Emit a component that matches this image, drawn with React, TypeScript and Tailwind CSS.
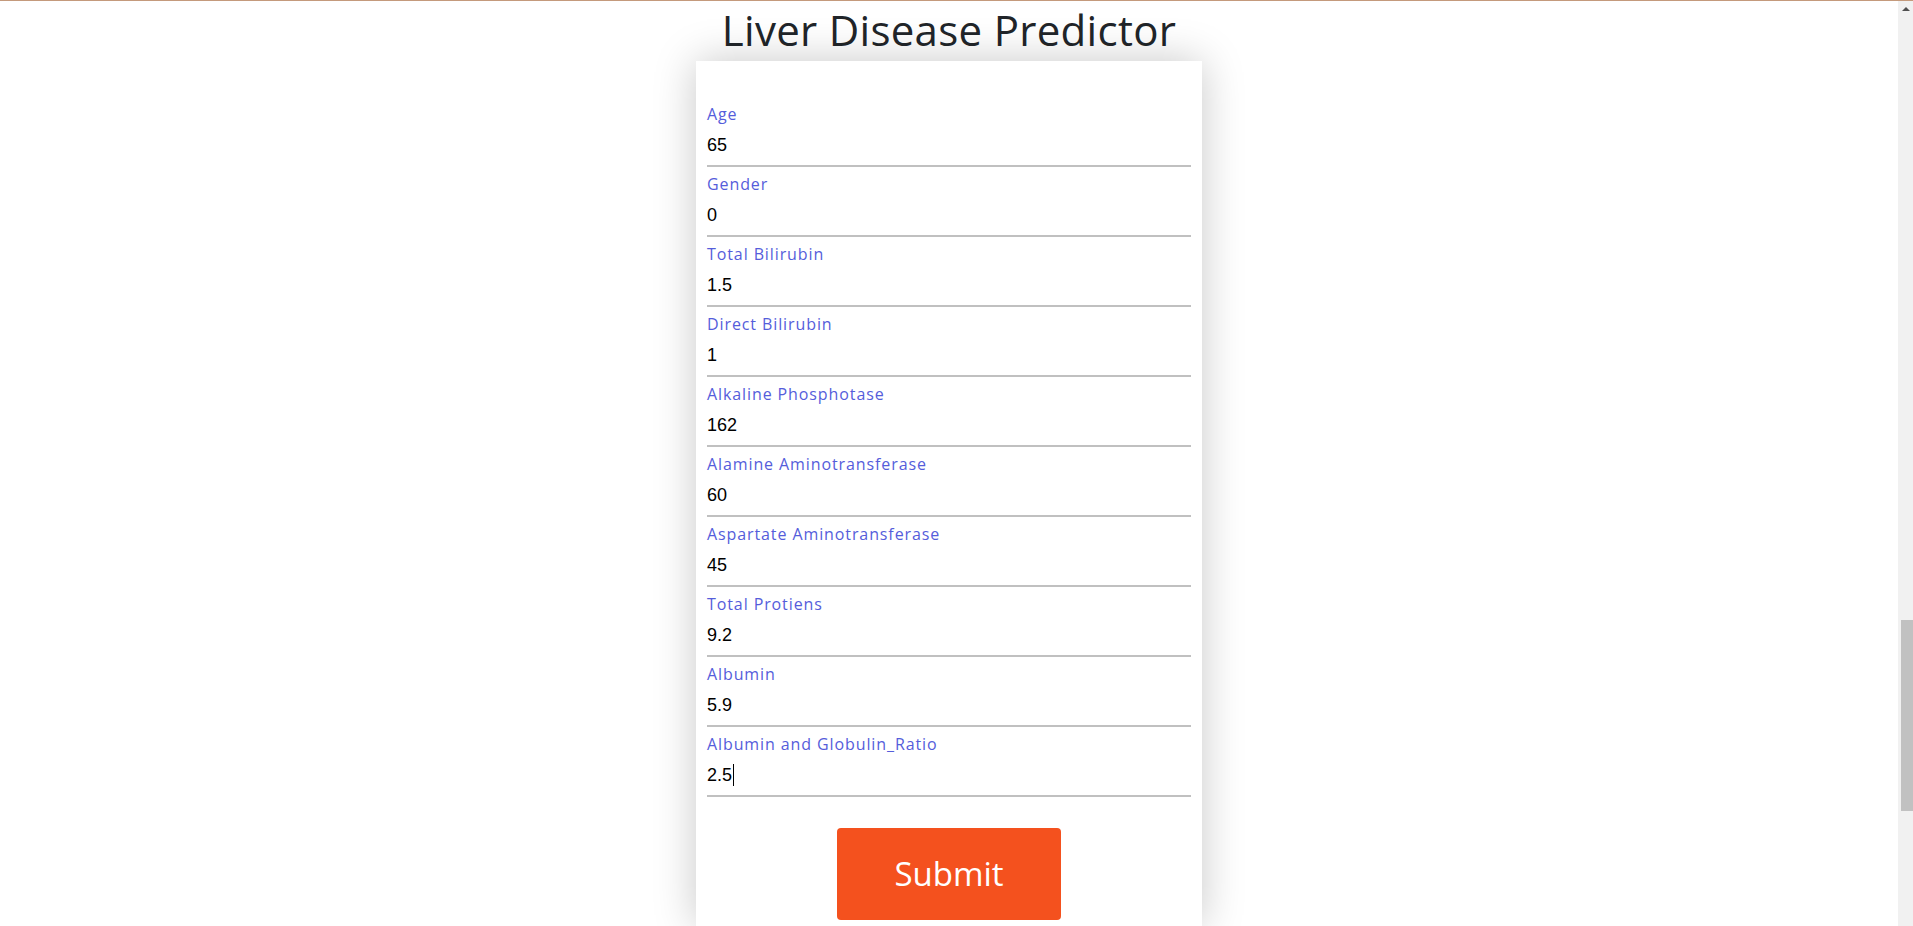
const fields = [
  { label: 'Age', value: '65' },
  { label: 'Gender', value: '0' },
  { label: 'Total Bilirubin', value: '1.5' },
  { label: 'Direct Bilirubin', value: '1' },
  { label: 'Alkaline Phosphotase', value: '162' },
  { label: 'Alamine Aminotransferase', value: '60' },
  { label: 'Aspartate Aminotransferase', value: '45' },
  { label: 'Total Protiens', value: '9.2' },
  { label: 'Albumin', value: '5.9' },
  { label: 'Albumin and Globulin_Ratio', value: '2.5' },
];

export default function App() {
  return (
    <div className="h-[926px] overflow-hidden flex border-t border-[#c49a7c] bg-white">
      {/* Page */}
      <div className="flex-1 flex flex-col items-center">
        <h1 className="leading-[58px] text-[42px] font-normal text-[#212529] font-['Open_Sans',sans-serif] tracking-[0.3px]">
          Liver Disease Predictor
        </h1>

        <div className="mt-[2px] w-[506px] flex-1 bg-white shadow-[0_0_40px_rgba(0,0,0,0.22)] px-[11px] pt-[36px]">
          <form className="flex flex-col" onSubmit={(e) => e.preventDefault()}>
            {fields.map((f, i) => (
              <div key={f.label} className="pt-[6px] border-b-2 border-[#c0c0c0]">
                <div className="h-[22px] leading-[22px] text-[16px] tracking-[0.9px] text-[#555ddb] font-['Open_Sans',sans-serif]">
                  {f.label}
                </div>
                <div className="h-[40px] flex items-center text-[18px] text-black font-['Liberation_Sans',Arial,sans-serif]">
                  {f.value}
                  {i === fields.length - 1 && (
                    <span className="inline-block w-px h-[22px] bg-black ml-px" />
                  )}
                </div>
              </div>
            ))}

            <div className="flex justify-center pt-[31px]">
              <button
                type="submit"
                className="w-[224px] h-[92px] rounded-[4px] bg-[#f4511e] text-white text-[33px] font-['Open_Sans',sans-serif]"
              >
                Submit
              </button>
            </div>
          </form>
        </div>
      </div>

      {/* Scrollbar */}
      <div className="w-[15px] bg-[#f1f1f1] flex flex-col items-end">
        <div className="h-[16px] w-full flex items-center justify-center">
          <div className="w-0 h-0 border-l-[4px] border-r-[4px] border-b-[4px] border-l-transparent border-r-transparent border-b-[#505050]" />
        </div>
        <div className="mt-[603px] w-[12px] h-[191px] bg-[#c1c1c1]" />
      </div>
    </div>
  );
}
